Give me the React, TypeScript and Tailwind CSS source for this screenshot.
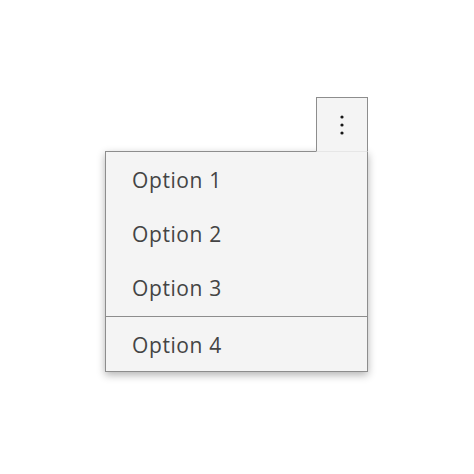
import React from "react";

export default function App() {
  const items = ["Option 1", "Option 2", "Option 3"];
  return (
    <div
      className="w-[474px] h-[474px] bg-white pt-[97px] pl-[105px]"
      style={{ fontFamily: '"Open Sans", "Noto Sans", sans-serif' }}
    >
      <div className="flex flex-col items-end w-[263px]">
        <div className="relative z-10 -mb-px w-[52px] h-[55px] border border-[#8d8d8d] border-b-[#e6e6e6] bg-[#f4f4f4] flex items-center justify-center">
          <svg width="6" height="22" viewBox="0 0 6 22">
            <circle cx="3" cy="3" r="1.6" fill="#161616" />
            <circle cx="3" cy="11" r="1.6" fill="#161616" />
            <circle cx="3" cy="19" r="1.6" fill="#161616" />
          </svg>
        </div>
        <div className="w-[263px] border border-[#8d8d8d] bg-[#f4f4f4] shadow-[0_3px_8px_rgba(0,0,0,0.3)] flex flex-col">
          {items.map((t) => (
            <div
              key={t}
              className="h-[54px] flex items-center pl-[26px] pt-[3px] text-[21px] tracking-[0.6px] text-[#444444]"
            >
              {t}
            </div>
          ))}
          <div className="mt-[2px] h-px bg-[#8d8d8d]" />
          <div className="h-[54px] flex items-center pl-[26px] pt-[3px] text-[21px] tracking-[0.6px] text-[#444444]">
            Option 4
          </div>
        </div>
      </div>
    </div>
  );
}
